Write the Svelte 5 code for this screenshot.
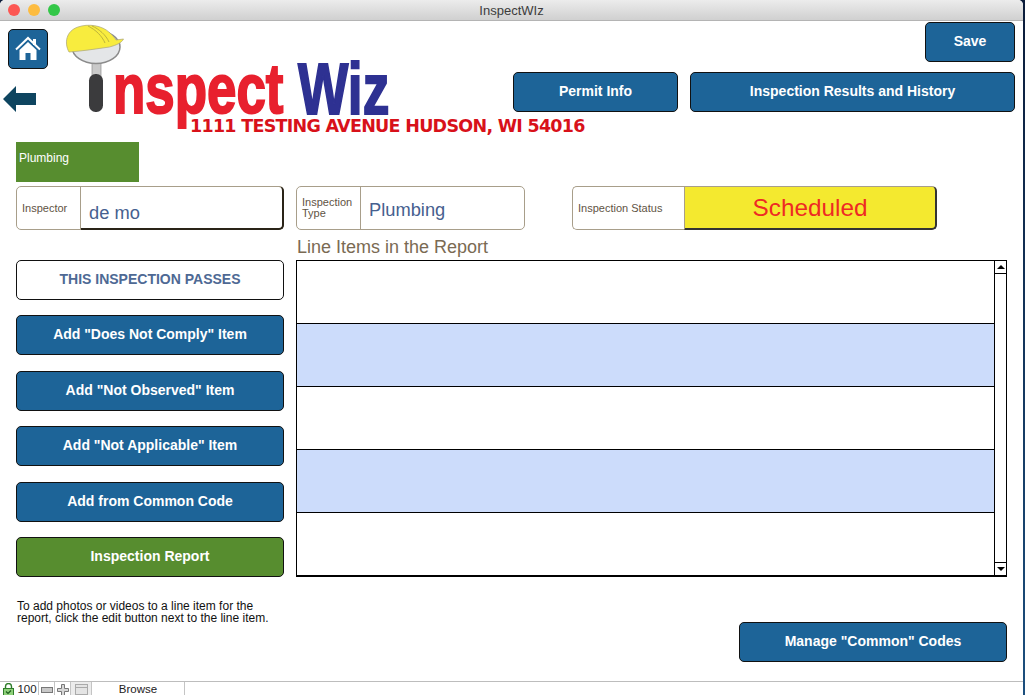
<script>
  const actions = [
    { label: 'Add "Does Not Comply" Item' },
    { label: 'Add "Not Observed" Item' },
    { label: 'Add "Not Applicable" Item' },
    { label: 'Add from Common Code' },
    { label: 'Inspection Report', green: true }
  ];
  const rows = [0, 1, 2, 3, 4];
</script>

<div class="window">
  <header class="titlebar">
    <span class="light red"></span><span class="light amber"></span><span class="light lime"></span>
    <span class="title">InspectWIz</span>
  </header>

  <div class="content">
    <section class="top">
      <div class="nav">
        <button class="btn home" aria-label="Home">
          <svg width="26" height="26" viewBox="0 0 26 26">
            <path d="M1 13.5 13 2l12 11.5" fill="none" stroke="#fff" stroke-width="2"/>
            <path d="M4.5 14 13 6l8.500 8v10H15.500v-7h-5v7H4.500z" fill="#fff"/>
            <rect x="18" y="3" width="3" height="6" fill="#fff"/>
          </svg>
        </button>
        <svg class="back" width="33" height="26" viewBox="0 0 33 26">
          <path d="M0 13 13 0v7h20v12H13v7z" fill="#0e4560"/>
        </svg>
      </div>

      <div class="logo">
        <svg class="mark" width="70" height="95" viewBox="60 21 70 95">
          <rect x="92" y="62" width="9" height="15" fill="#c9c9c9" stroke="#8d8d8d" stroke-width=".7"/>
          <ellipse cx="96" cy="47" rx="24" ry="16.500" fill="#e4e6e8" stroke="#8b8b8b" stroke-width="1.500"/>
          <rect x="89" y="74" width="14" height="38" rx="6.500" fill="#3b3b3d"/>
          <path d="M69 52C64 43 66 31 78 27c10-3.500 24-2 32 6 3 3 5 5 6 7l7.500-1c-2 4-7 6-14 8-14 2-27 4-40 5z" fill="#f8ec3e" stroke="#a9a57a" stroke-width=".7"/>
          <path d="M92 26c7 3 14 9 17 16M88 26c8 4 14 10 17 17" fill="none" stroke="#b5ad3a" stroke-width=".9"/>
        </svg>
        <span class="word inspect">nspect</span>
        <span class="word wiz">Wiz</span>
        <span class="address">1111 TESTING AVENUE HUDSON, WI 54016</span>
      </div>

      <div class="top-actions">
        <button class="btn save">Save</button>
        <div class="top-row">
          <button class="btn permit">Permit Info</button>
          <button class="btn history">Inspection Results and History</button>
        </div>
      </div>
    </section>

    <main class="main">
      <div class="tag">Plumbing</div>

      <div class="fields">
        <div class="field inspector">
          <span class="label l-inspector">Inspector</span>
          <span class="value raised">de mo</span>
        </div>
        <div class="field type">
          <span class="label l-type">Inspection Type</span>
          <span class="value">Plumbing</span>
        </div>
        <div class="field status">
          <span class="label l-status">Inspection Status</span>
          <span class="state">Scheduled</span>
        </div>
      </div>

      <div class="work">
        <div class="actions">
          <button class="btn passes">THIS INSPECTION PASSES</button>
          {#each actions as a}
            <button class="btn action" class:green={a.green}>{a.label}</button>
          {/each}
        </div>
        <div class="report">
          <h2>Line Items in the Report</h2>
          <div class="list">
            <div class="rows">
              {#each rows as r}
                <div class="row" class:alt={r % 2 === 1}></div>
              {/each}
            </div>
            <div class="scroll">
              <span class="arrow up"></span>
              <span class="arrow down"></span>
            </div>
          </div>
        </div>
      </div>

      <div class="foot">
        <p>To add photos or videos to a line item for the<br />report, click the edit button next to the line item.</p>
        <button class="btn manage">Manage "Common" Codes</button>
      </div>
    </main>
  </div>

  <footer class="statusbar">
    <span class="cell lock">
      <svg width="11" height="13" viewBox="0 0 11 13">
        <path d="M2.500 5.500V3.500a3 3 0 0 1 6 0v2" fill="none" stroke="#2f7d2a" stroke-width="1.400"/>
        <rect x=".5" y="5.500" width="10" height="7.500" fill="#8fd17a" stroke="#2f7d2a"/>
        <path d="m3 8.500 2 2 3-3" fill="none" stroke="#1c5c1c" stroke-width="1.200"/>
      </svg>
    </span>
    <span class="cell zoomval">100</span>
    <span class="cell tool">
      <svg width="12" height="6" viewBox="0 0 12 6"><rect x=".5" y=".5" width="11" height="5" fill="#c8c8c8" stroke="#777"/></svg>
    </span>
    <span class="cell tool">
      <svg width="12" height="12" viewBox="0 0 12 12"><path d="M4.500.5h3v4h4v3h-4v4h-3v-4h-4v-3h4z" fill="#d6d6d6" stroke="#777"/></svg>
    </span>
    <span class="cell view">
      <svg width="13" height="11" viewBox="0 0 13 11"><rect x=".5" y=".5" width="12" height="10" fill="#e4e4e4" stroke="#aaa"/><path d="M1 3.500h11" stroke="#aaa"/></svg>
    </span>
    <span class="cell mode">Browse</span>
  </footer>
</div>

<style>
  :global(body) {
    margin: 0;
    background: linear-gradient(#0b1c3a, #1c4f7e);
  }
  .window {
    width: 1023px;
    height: 695px;
    background: #fff;
    border-radius: 5px 5px 0 0;
    overflow: hidden;
    display: flex;
    flex-direction: column;
    font-family: "Liberation Sans", Arial, sans-serif;
  }
  .titlebar {
    flex: none;
    height: 20px;
    box-sizing: content-box;
    border-bottom: 1px solid #b4b4b4;
    background: linear-gradient(#ececec, #d0d0d0);
    display: flex;
    align-items: center;
    gap: 8px;
    padding-left: 8px;
    position: relative;
  }
  .light { width: 12px; height: 12px; border-radius: 50%; }
  .red { background: #fc5753; }
  .amber { background: #fdbc40; }
  .lime { background: #33c748; }
  .title {
    position: absolute;
    left: 0;
    right: 0;
    top: 3px;
    text-align: center;
    font-size: 13px;
    line-height: 15px;
    color: #3c3c3c;
  }
  .content { flex: 1; min-height: 0; }

  .btn {
    box-sizing: border-box;
    display: block;
    height: 40px;
    margin: 0;
    padding: 0 0 2px;
    border: 1px solid #111;
    border-radius: 5px;
    background: #1d6498;
    color: #fff;
    font-family: inherit;
    font-size: 14px;
    font-weight: 700;
    text-align: center;
  }

  .top { display: flex; height: 121px; }
  .nav { flex: none; width: 57px; padding: 8px 0 0 8px; box-sizing: border-box; }
  .home { width: 40px; display: flex; align-items: center; justify-content: center; padding: 0; }
  .back { display: block; margin: 17px 0 0 -5px; }

  .logo { flex: 1; min-width: 0; position: relative; height: 121px; }
  .mark { position: absolute; left: 3px; top: 0; }
  .word {
    position: absolute;
    font-weight: 700;
    line-height: 1;
    white-space: nowrap;
    transform-origin: 0 0;
    -webkit-text-stroke: 2px currentColor;
  }
  .inspect { left: 56px; top: 32px; font-size: 71px; color: #e8202e; transform: scaleX(.745); }
  .wiz { left: 241px; top: 31px; font-size: 73px; color: #2e3192; transform: scaleX(.73); }
  .address {
    position: absolute;
    left: 133px;
    top: 95px;
    font-family: "DejaVu Sans", sans-serif;
    font-weight: 700;
    font-size: 17.500px;
    letter-spacing: -.72px;
    line-height: 20px;
    color: #d8111a;
    white-space: nowrap;
  }

  .top-actions {
    flex: none;
    margin-right: 8px;
    padding-top: 1px;
    display: flex;
    flex-direction: column;
    align-items: flex-end;
    gap: 10px;
  }
  .top-row { display: flex; gap: 12px; }
  .save { width: 90px; }
  .permit { width: 165px; }
  .history { width: 325px; }

  .main { padding: 0 16px; }
  .tag {
    width: 123px;
    height: 40px;
    box-sizing: border-box;
    padding: 9px 3px;
    background: #578d2f;
    color: #fff;
    font-size: 12px;
    line-height: 14px;
  }

  .fields { display: flex; margin-top: 4px; }
  .field {
    box-sizing: border-box;
    height: 44px;
    display: flex;
    border: 1px solid #a89e8a;
    border-radius: 5px;
  }
  .inspector { width: 268px; margin-right: 12px; }
  .type { width: 229px; margin-right: 47px; }
  .status { width: 365px; border: 0; }
  .label {
    flex: none;
    box-sizing: border-box;
    display: flex;
    align-items: center;
    font-size: 11px;
    line-height: 11px;
    color: #5f5444;
    padding-left: 5px;
  }
  .l-inspector, .l-type { width: 64px; border-right: 1px solid #a89e8a; }
  .l-status {
    width: 112px;
    border: 1px solid #a89e8a;
    border-right: 0;
    border-radius: 5px 0 0 5px;
  }
  .value {
    flex: 1;
    box-sizing: border-box;
    padding: 12px 0 0 8px;
    font-size: 18.300px;
    line-height: 22px;
    color: #46608f;
  }
  .raised {
    margin: -1px -1px -1px 0;
    border-radius: 0 5px 5px 0;
    border-right: 2px solid #2a2418;
    border-bottom: 2px solid #2a2418;
    border-top: 1px solid #a89e8a;
    padding-top: 15px;
  }
  .state {
    flex: 1;
    box-sizing: border-box;
    background: #f4e92f;
    border: 1px solid #a89e8a;
    border-right: 2px solid #333;
    border-bottom: 2px solid #333;
    border-radius: 0 5px 5px 0;
    color: #ee2a24;
    font-size: 24.300px;
    line-height: 42px;
    text-align: center;
  }

  .work { display: flex; gap: 12px; margin-top: 8px; }
  .actions { flex: none; width: 268px; padding-top: 22px; }
  .action { width: 100%; margin-top: 15px; }
  .action:nth-child(even) { margin-top: 15px; }
  .action:nth-child(odd) { margin-top: 16px; }
  .passes {
    width: 100%;
    background: #fff;
    color: #4e6994;
  }
  .green { background: #578d2f; }

  .report { flex: 1; }
  h2 {
    margin: 0 0 4px 1px;
    font-size: 18px;
    line-height: 18px;
    font-weight: 400;
    color: #7a6a53;
  }
  .list {
    box-sizing: border-box;
    height: 317px;
    display: flex;
    border: 1px solid #000;
    border-bottom-width: 2px;
  }
  .rows { flex: 1; }
  .row {
    box-sizing: border-box;
    height: 63px;
    border-bottom: 1px solid #000;
  }
  .row:last-child { height: 62px; border-bottom: 0; }
  .alt { background: #ccdcfb; }
  .scroll {
    flex: none;
    box-sizing: border-box;
    width: 12px;
    border-left: 1px solid #000;
    display: flex;
    flex-direction: column;
    justify-content: space-between;
  }
  .arrow {
    display: flex;
    align-items: center;
    justify-content: center;
    height: 12px;
  }
  .arrow::before {
    content: "";
    border-left: 4px solid transparent;
    border-right: 4px solid transparent;
  }
  .up { border-bottom: 1px solid #000; }
  .up::before { border-bottom: 4px solid #000; }
  .down { border-top: 1px solid #000; }
  .down::before { border-top: 4px solid #000; }

  .foot { display: flex; justify-content: space-between; }
  .foot p {
    margin: 23px 0 0 1px;
    font-size: 12px;
    line-height: 12px;
    color: #111;
  }
  .manage { width: 268px; margin-top: 45px; }

  .statusbar {
    flex: none;
    box-sizing: border-box;
    height: 14px;
    border-top: 1px solid #bdbdbd;
    display: flex;
    overflow: hidden;
    font-size: 11.500px;
    line-height: 14px;
    color: #222;
  }
  .cell { flex: none; display: flex; justify-content: center; border-right: 1px solid #c4c4c4; box-sizing: border-box; height: 13px; }
  .lock { width: 16px; border: 0; padding-top: 1px; }
  .zoomval { width: 23px; }
  .tool { width: 16px; align-items: center; padding-top: 2px; }
  .view { width: 21px; background: #ececec; align-items: center; padding-top: 1px; }
  .mode { width: 93px; }
</style>
